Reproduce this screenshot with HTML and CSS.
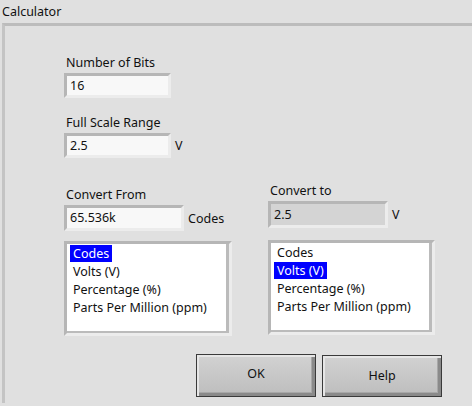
FILE: index.html
```html
<!DOCTYPE html>
<html>
<head>
<meta charset="utf-8">
<link rel="stylesheet" href="styles.css">
</head>
<body>
<div class="title">Calculator</div>
<div class="frame">
  <div class="field-label first">Number of Bits</div>
  <div class="row"><div class="input w107">16</div></div>
  <div class="field-label second">Full Scale Range</div>
  <div class="row"><div class="input w107">2.5</div><span class="unit">V</span></div>

  <div class="columns">
    <div class="col left">
      <div class="field-label">Convert From</div>
      <div class="row"><div class="input w120">65.536k</div><span class="unit">Codes</span></div>
      <div class="listbox">
        <div class="item"><span class="sel">Codes</span></div>
        <div class="item"><span>Volts (V)</span></div>
        <div class="item"><span>Percentage (%)</span></div>
        <div class="item"><span>Parts Per Million (ppm)</span></div>
      </div>
    </div>
    <div class="col right">
      <div class="field-label">Convert to</div>
      <div class="row"><div class="input w120 disabled">2.5</div><span class="unit">V</span></div>
      <div class="listbox">
        <div class="item"><span>Codes</span></div>
        <div class="item"><span class="sel">Volts (V)</span></div>
        <div class="item"><span>Percentage (%)</span></div>
        <div class="item"><span>Parts Per Million (ppm)</span></div>
      </div>
    </div>
  </div>

  <div class="buttons">
    <button class="btn ok">OK</button>
    <button class="btn help">Help</button>
  </div>
</div>
</body>
</html>
```
FILE: styles.css
```css
html, body {
  margin: 0;
  padding: 0;
  background: #e0e0e0;
  width: 472px;
  height: 406px;
  overflow: hidden;
}
body {
  font-family: "Noto Sans", "Liberation Sans", sans-serif;
  font-size: 12.5px;
  color: #111;
}
.title {
  height: 23px;
  line-height: 23px;
  padding-left: 2px;
  box-sizing: border-box;
}
.frame {
  margin-left: 2px;
  border-top: 3px solid #bcbcbc;
  border-left: 3px solid #c4c4c4;
  padding-left: 59px;
  height: 380px;
  box-sizing: border-box;
}
.field-label {
  height: 16px;
  line-height: 16px;
  padding-left: 2px;
  margin-bottom: 2px;
}
.field-label.first { margin-top: 29px; }
.field-label.second { margin-top: 17px; }
.row {
  display: flex;
  align-items: center;
  height: 25px;
}
.input {
  height: 25px;
  box-sizing: border-box;
  border: 3px solid;
  border-color: #b6b6b6 #ececec #ececec #b6b6b6;
  background: #f8f8f8;
  padding-left: 3px;
  line-height: 19px;
}
.input.disabled { background: #d4d4d4; }
.w107 { width: 107px; }
.w120 { width: 120px; }
.unit { margin-left: 4px; }
.columns {
  display: grid;
  grid-template-columns: 168px 167px;
  column-gap: 36px;
  margin-top: 29px;
}
.col.left .row { height: 26px; }
.col.left .input { height: 26px; line-height: 20px; }
.col.right .field-label { margin-top: -4px; }
.col.right .row { height: 27px; }
.col.right .input { height: 27px; line-height: 21px; }
.col.left .listbox { margin-top: 10px; }
.col.right .listbox { margin-top: 12px; }
.listbox {
  height: 95px;
  box-sizing: border-box;
  border: 3px solid;
  border-color: #b6b6b6 #ececec #ececec #b6b6b6;
  box-shadow: inset -3px -2px 0 #bbbbbb;
  background: #fff;
  padding: 1px 0 0 3px;
}
.item {
  height: 18px;
  line-height: 17px;
}
.item span { padding: 0 3px; display: inline-block; }
.item .sel {
  background: #0000ff;
  color: #fff;
}
.buttons {
  display: flex;
  gap: 6px;
  margin-top: 18px;
  margin-left: 132px;
  align-items: flex-start;
}
.btn {
  width: 120px;
  height: 43px;
  border: 1px solid #3a3a3a;
  background: linear-gradient(#d2d2d2, #bdbdbd);
  box-shadow: inset 2px 2px 0 #e6e6e6, inset -3px -3px 0 #8a8a8a, inset -4px -4px 0 #a8a8a8;
  font-family: "Noto Sans", "Liberation Sans", sans-serif;
  font-size: 12.5px;
  color: #111;
  padding: 0;
}
.btn.ok { padding-bottom: 5px; }
.btn.help { height: 42px; margin-top: 1px; padding-bottom: 1px; }
```
